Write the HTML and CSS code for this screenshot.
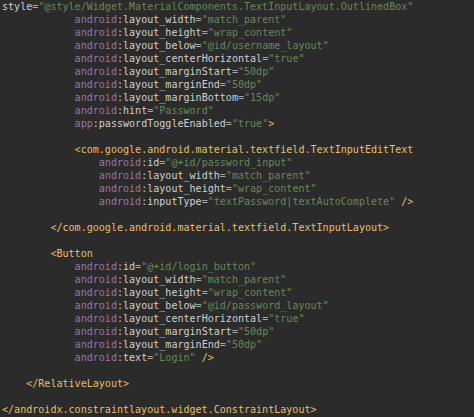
FILE: index.html
```html
<!DOCTYPE html>
<html lang="en">
  <head>
    <meta charset="UTF-8" />
    <title>activity_main.xml</title>
    <link rel="stylesheet" href="styles.css">
  </head>
  <body>
    <pre class="editor"><span class="at">style</span><span class="eq">=</span><span class="str">"@style/Widget.MaterialComponents.TextInputLayout.OutlinedBox"</span>
            <span class="ns">android</span>:<span class="at">layout_width</span><span class="eq">=</span><span class="str">"match_parent"</span>
            <span class="ns">android</span>:<span class="at">layout_height</span><span class="eq">=</span><span class="str">"wrap_content"</span>
            <span class="ns">android</span>:<span class="at">layout_below</span><span class="eq">=</span><span class="str">"@id/username_layout"</span>
            <span class="ns">android</span>:<span class="at">layout_centerHorizontal</span><span class="eq">=</span><span class="str">"true"</span>
            <span class="ns">android</span>:<span class="at">layout_marginStart</span><span class="eq">=</span><span class="str">"50dp"</span>
            <span class="ns">android</span>:<span class="at">layout_marginEnd</span><span class="eq">=</span><span class="str">"50dp"</span>
            <span class="ns">android</span>:<span class="at">layout_marginBottom</span><span class="eq">=</span><span class="str">"15dp"</span>
            <span class="ns">android</span>:<span class="at">hint</span><span class="eq">=</span><span class="str">"Password"</span>
            <span class="ns">app</span>:<span class="at">passwordToggleEnabled</span><span class="eq">=</span><span class="str">"true"</span><span class="tag">&gt;</span>

            <span class="tag">&lt;com.google.android.material.textfield.TextInputEditText</span>
                <span class="ns">android</span>:<span class="at">id</span><span class="eq">=</span><span class="str">"@+id/password_input"</span>
                <span class="ns">android</span>:<span class="at">layout_width</span><span class="eq">=</span><span class="str">"match_parent"</span>
                <span class="ns">android</span>:<span class="at">layout_height</span><span class="eq">=</span><span class="str">"wrap_content"</span>
                <span class="ns">android</span>:<span class="at">inputType</span><span class="eq">=</span><span class="str">"textPassword|textAutoComplete"</span> <span class="tag">/&gt;</span>

        <span class="tag">&lt;/com.google.android.material.textfield.TextInputLayout&gt;</span>

        <span class="tag">&lt;Button</span>
            <span class="ns">android</span>:<span class="at">id</span><span class="eq">=</span><span class="str">"@+id/login_button"</span>
            <span class="ns">android</span>:<span class="at">layout_width</span><span class="eq">=</span><span class="str">"match_parent"</span>
            <span class="ns">android</span>:<span class="at">layout_height</span><span class="eq">=</span><span class="str">"wrap_content"</span>
            <span class="ns">android</span>:<span class="at">layout_below</span><span class="eq">=</span><span class="str">"@id/password_layout"</span>
            <span class="ns">android</span>:<span class="at">layout_centerHorizontal</span><span class="eq">=</span><span class="str">"true"</span>
            <span class="ns">android</span>:<span class="at">layout_marginStart</span><span class="eq">=</span><span class="str">"50dp"</span>
            <span class="ns">android</span>:<span class="at">layout_marginEnd</span><span class="eq">=</span><span class="str">"50dp"</span>
            <span class="ns">android</span>:<span class="at">text</span><span class="eq">=</span><span class="str">"Login"</span> <span class="tag">/&gt;</span>

    <span class="tag">&lt;/RelativeLayout&gt;</span>

<span class="tag">&lt;/androidx.constraintlayout.widget.ConstraintLayout&gt;</span></pre>
  </body>
</html>
```

FILE: styles.css
```css
html {
  box-sizing: border-box;
}

body {
  margin: 0;
  padding: 0;
  background-color: #2b2b2b;
  overflow: hidden;
}

.editor {
  margin: 0;
  padding: 0 0 0 2px;
  font-family: "DejaVu Sans Mono", "Liberation Mono", monospace;
  font-size: 10.05px;
  line-height: 13px;
  color: #c4c4c4;
  white-space: pre;
}

.ns {
  color: #9876aa;
}

.at {
  color: #cfcfcf;
}

.eq {
  color: #a9a9a9;
}

.str {
  color: #6a8759;
}

.tag {
  color: #e8bf6a;
}
```
